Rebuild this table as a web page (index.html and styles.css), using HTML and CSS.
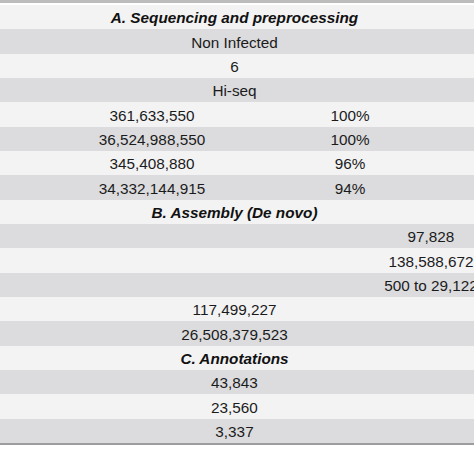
FILE: index.html
```html
<!DOCTYPE html>
<html>
<head>
<meta charset="utf-8">
<link rel="stylesheet" href="styles.css">
</head>
<body>
<div class="page">
  <div class="topbar"></div>
  <div class="table">
    <div class="row light"><div class="cell full head">A. Sequencing and preprocessing</div></div>
    <div class="row gray"><div class="cell full">Non Infected</div></div>
    <div class="row light"><div class="cell full">6</div></div>
    <div class="row gray"><div class="cell full">Hi-seq</div></div>
    <div class="row light"><div class="cell c1">361,633,550</div><div class="cell c2">100%</div></div>
    <div class="row gray"><div class="cell c1">36,524,988,550</div><div class="cell c2">100%</div></div>
    <div class="row light"><div class="cell c1">345,408,880</div><div class="cell c2">96%</div></div>
    <div class="row gray"><div class="cell c1">34,332,144,915</div><div class="cell c2">94%</div></div>
    <div class="row light"><div class="cell full head">B. Assembly (De novo)</div></div>
    <div class="row gray"><div class="cell c3">97,828</div></div>
    <div class="row light"><div class="cell c3">138,588,672</div></div>
    <div class="row gray"><div class="cell c3">500 to 29,122</div></div>
    <div class="row light"><div class="cell full">117,499,227</div></div>
    <div class="row gray"><div class="cell full">26,508,379,523</div></div>
    <div class="row light"><div class="cell full head">C. Annotations</div></div>
    <div class="row gray"><div class="cell full">43,843</div></div>
    <div class="row light"><div class="cell full">23,560</div></div>
    <div class="row gray"><div class="cell full">3,337</div></div>
  </div>
  <div class="bottomline"></div>
</div>
</body>
</html>
```
FILE: styles.css
```css
html, body {
  margin: 0;
  padding: 0;
  background: #ffffff;
}
.page {
  width: 474px;
  height: 474px;
  overflow: hidden;
  font-family: "Liberation Sans", Arial, sans-serif;
  font-size: 15.3px;
  color: #1b1b1b;
}
.topbar {
  height: 3px;
  background: #bcbcbc;
  margin-bottom: 2px;
}
.table {
  display: flex;
  flex-direction: column;
}
.row {
  height: 24.333px;
  display: grid;
  grid-template-columns: 304px 92px 70px 8px;
  box-sizing: border-box;
}
.light { background: #f3f3f4; }
.gray { background: #dcdcde; }
.cell {
  display: flex;
  justify-content: center;
  white-space: nowrap;
  padding-top: 3.4px;
  line-height: 20.93px;
  box-sizing: border-box;
}
.full {
  grid-column: 1 / -1;
  padding-right: 5px;
}
.c1 { grid-column: 1; }
.c2 { grid-column: 2; }
.c3 { grid-column: 3; }
.head {
  font-weight: bold;
  font-style: italic;
  color: #111;
}
.bottomline {
  height: 2px;
  background: #9d9d9f;
}
```
